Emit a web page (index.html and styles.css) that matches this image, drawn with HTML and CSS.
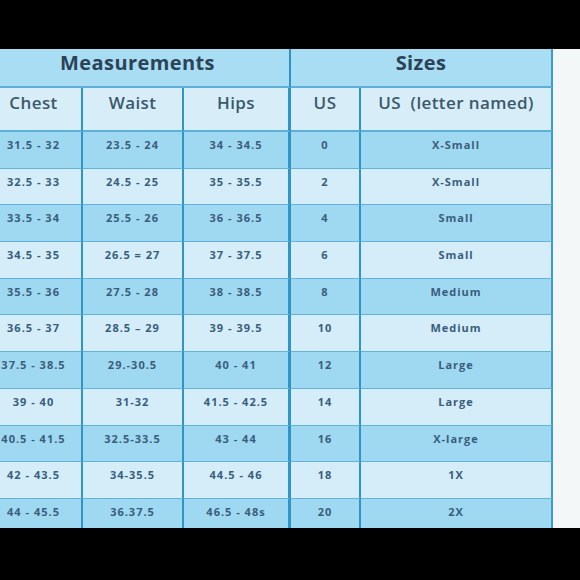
FILE: index.html
```html
<!DOCTYPE html>
<html>
<head>
<meta charset="utf-8">
<link rel="stylesheet" href="styles.css">
</head>
<body>
<div class="frame">
  <div class="clip">
    <div class="chart">
      <div class="group group-m">Measurements</div>
      <div class="group group-s">Sizes</div>

      <div class="sub">Chest</div>
      <div class="sub">Waist</div>
      <div class="sub sep">Hips</div>
      <div class="sub">US</div>
      <div class="sub last pre">US  (letter named)</div>

      <div class="c dark">31.5 - 32</div><div class="c dark">23.5 - 24</div><div class="c dark sep">34 - 34.5</div><div class="c dark">0</div><div class="c dark last">X-Small</div>
      <div class="c light">32.5 - 33</div><div class="c light">24.5 - 25</div><div class="c light sep">35 - 35.5</div><div class="c light">2</div><div class="c light last">X-Small</div>
      <div class="c dark">33.5 - 34</div><div class="c dark">25.5 - 26</div><div class="c dark sep">36 - 36.5</div><div class="c dark">4</div><div class="c dark last">Small</div>
      <div class="c light">34.5 - 35</div><div class="c light">26.5 = 27</div><div class="c light sep">37 - 37.5</div><div class="c light">6</div><div class="c light last">Small</div>
      <div class="c dark">35.5 - 36</div><div class="c dark">27.5 - 28</div><div class="c dark sep">38 - 38.5</div><div class="c dark">8</div><div class="c dark last">Medium</div>
      <div class="c light">36.5 - 37</div><div class="c light">28.5 – 29</div><div class="c light sep">39 - 39.5</div><div class="c light">10</div><div class="c light last">Medium</div>
      <div class="c dark">37.5 - 38.5</div><div class="c dark">29.-30.5</div><div class="c dark sep">40 - 41</div><div class="c dark">12</div><div class="c dark last">Large</div>
      <div class="c light">39 - 40</div><div class="c light">31-32</div><div class="c light sep">41.5 - 42.5</div><div class="c light">14</div><div class="c light last">Large</div>
      <div class="c dark">40.5 - 41.5</div><div class="c dark">32.5-33.5</div><div class="c dark sep">43 - 44</div><div class="c dark">16</div><div class="c dark last">X-large</div>
      <div class="c light">42 - 43.5</div><div class="c light">34-35.5</div><div class="c light sep">44.5 - 46</div><div class="c light">18</div><div class="c light last">1X</div>
      <div class="c dark">44 - 45.5</div><div class="c dark">36.37.5</div><div class="c dark sep">46.5 - 48s</div><div class="c dark">20</div><div class="c dark last">2X</div>
    </div>
  </div>
  <div class="strip"></div>
</div>
</body>
</html>
```

FILE: styles.css
```css
html, body {
  margin: 0;
  padding: 0;
  background: #000;
}

.frame {
  margin-top: 49px;
  height: 479px;
  display: flex;
}

.clip {
  width: 553px;
  overflow: hidden;
  background: #a3dbf2;
}

.strip {
  flex: 1;
  background: #f4f7f8;
}

.chart {
  margin-left: -14px;
  display: grid;
  grid-template-columns: 97px 101px 107px 70px 192px;
  grid-template-rows: 39px 44px;
  grid-auto-rows: 36.7px;
  font-family: "Open Sans", "Liberation Sans", sans-serif;
  color: #34506a;
}

.group {
  background: #a8ddf3;
  border-bottom: 2px solid #5fb0d8;
  text-align: center;
  font-size: 20px;
  font-weight: 700;
  letter-spacing: 0.4px;
  line-height: 28px;
  color: #2c4257;
}

.group-m {
  grid-column: 1 / span 3;
  border-right: 2px solid #2d93c6;
}

.group-s {
  grid-column: 4 / span 2;
  border-right: 2px solid #3a9ccc;
}

.sub {
  background: #d7eef9;
  border-right: 2px solid #2f95c7;
  border-bottom: 2px solid #5db0d9;
  text-align: center;
  font-size: 17px;
  font-weight: 600;
  letter-spacing: 0.4px;
  line-height: 22px;
  padding-top: 4px;
  color: #3d586c;
}

.pre {
  white-space: pre;
}

.c {
  border-right: 2px solid #2f95c7;
  border-bottom: 1px solid #62b3da;
  text-align: center;
  font-size: 11px;
  font-weight: 700;
  letter-spacing: 1px;
  line-height: 15px;
  padding-top: 5px;
  color: #3a5d7c;
}

.sep {
  border-right-width: 3px;
}

.last {
  border-right: 2px solid #3a9ccc;
}

.dark {
  background: #9fd9f1;
}

.light {
  background: #d4edf8;
}
```
